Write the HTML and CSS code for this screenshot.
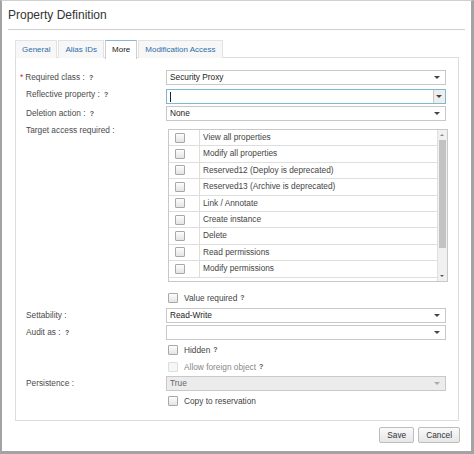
FILE: index.html
```html
<!DOCTYPE html>
<html lang="en">
<head>
    <meta charset="UTF-8">
    <title>Property Definition</title>
    <link rel="stylesheet" href="styles.css">
</head>
<body>
    <div class="window">
        <div class="title">Property Definition</div>

        <div class="tabs">
            <div class="tab">General</div>
            <div class="tab">Alias IDs</div>
            <div class="tab active">More</div>
            <div class="tab">Modification Access</div>
        </div>

        <div class="panel">
            <div class="form">
                <div class="label"><span class="req">*</span>Required class : <span class="help">?</span></div>
                <div class="select"><span>Security Proxy</span><span class="arrow"></span></div>

                <div class="label">Reflective property : <span class="help">?</span></div>
                <div class="select focus"><span class="caret"></span><span class="arrow-btn"><span class="arrow"></span></span></div>

                <div class="label">Deletion action : <span class="help">?</span></div>
                <div class="select"><span>None</span><span class="arrow"></span></div>

                <div class="label">Target access required :</div>
                <div class="listbox">
                    <div class="rows">
                        <div class="row"><span class="cb-cell"><span class="cb"></span></span><span class="txt">View all properties</span></div>
                        <div class="row"><span class="cb-cell"><span class="cb"></span></span><span class="txt">Modify all properties</span></div>
                        <div class="row"><span class="cb-cell"><span class="cb"></span></span><span class="txt">Reserved12 (Deploy is deprecated)</span></div>
                        <div class="row"><span class="cb-cell"><span class="cb"></span></span><span class="txt">Reserved13 (Archive is deprecated)</span></div>
                        <div class="row"><span class="cb-cell"><span class="cb"></span></span><span class="txt">Link / Annotate</span></div>
                        <div class="row"><span class="cb-cell"><span class="cb"></span></span><span class="txt">Create instance</span></div>
                        <div class="row"><span class="cb-cell"><span class="cb"></span></span><span class="txt">Delete</span></div>
                        <div class="row"><span class="cb-cell"><span class="cb"></span></span><span class="txt">Read permissions</span></div>
                        <div class="row"><span class="cb-cell"><span class="cb"></span></span><span class="txt">Modify permissions</span></div>
                    </div>
                    <div class="scrollbar">
                        <span class="sb-up"></span>
                        <span class="sb-track"><span class="sb-thumb"></span></span>
                        <span class="sb-down"></span>
                    </div>
                </div>

                <div class="label"></div>
                <div class="check first"><span class="cb"></span>Value required <span class="help">?</span></div>

                <div class="label">Settability :</div>
                <div class="select"><span>Read-Write</span><span class="arrow"></span></div>

                <div class="label">Audit as : <span class="help">?</span></div>
                <div class="select"><span></span><span class="arrow"></span></div>

                <div class="label"></div>
                <div class="check"><span class="cb"></span>Hidden <span class="help">?</span></div>

                <div class="label"></div>
                <div class="check disabled"><span class="cb"></span>Allow foreign object <span class="help">?</span></div>

                <div class="label">Persistence :</div>
                <div class="select disabled"><span>True</span><span class="arrow"></span></div>

                <div class="label"></div>
                <div class="check"><span class="cb"></span>Copy to reservation</div>
            </div>
        </div>

        <div class="buttons">
            <button class="btn">Save</button>
            <button class="btn">Cancel</button>
        </div>
    </div>
</body>
</html>
```

FILE: styles.css
```css
body {
    margin: 0;
    font-family: "Liberation Sans", Arial, sans-serif;
    color: #333;
}
.window {
    width: 474px;
    height: 454px;
    box-sizing: border-box;
    border-left: 2px solid #a3a3a3;
    border-right: 3px solid #a3a3a3;
    border-bottom: 3px solid #a3a3a3;
    border-top: 1px solid #d0d0d0;
    background: #fff;
}
.title {
    margin: 0 6px;
    padding: 7px 0 0 0;
    height: 21px;
    font-size: 12px;
    color: #333;
    border-bottom: 1px solid #cfcfcf;
}
.tabs {
    display: flex;
    margin: 10px 0 0 13px;
    height: 17px;
}
.tab {
    font-size: 8px;
    color: #2d6ea8;
    padding: 4px 6px 0;
    height: 13px;
    margin-right: 1px;
    background: #f7f7f7;
    border: 1px solid #e2e2e2;
    border-bottom: none;
}
.tab.active {
    color: #222;
    background: #fff;
    border-color: #cfcfcf;
    border-top-color: #8bb6d6;
    height: 14px;
    position: relative;
    z-index: 1;
}
.panel {
    margin-left: 13px;
    width: 444px;
    height: 364px;
    box-sizing: border-box;
    border: 1px solid #dcdcdc;
    padding: 12px 0 0 10px;
}
.form {
    display: grid;
    grid-template-columns: 140px 280px;
    row-gap: 2px;
    font-size: 8.3px;
}
.label {
    color: #4a4a4a;
    line-height: 15px;
    white-space: nowrap;
}
.req {
    color: #d02020;
    margin-left: -6px;
    margin-right: 2px;
}
.help {
    font-weight: bold;
    font-size: 7px;
    color: #555;
    margin-left: 2px;
}
.select {
    position: relative;
    height: 15px;
    box-sizing: border-box;
    border: 1px solid #c8c8c8;
    padding-left: 3px;
    line-height: 13px;
    color: #222;
    background: #fff;
}
.select.focus {
    border-color: #7fb8d2;
    margin-top: 2px;
}
.select.disabled {
    background: #ececec;
    color: #666;
}
.arrow {
    position: absolute;
    right: 5px;
    top: 5px;
    border-left: 3px solid transparent;
    border-right: 3px solid transparent;
    border-top: 3px solid #444;
}
.select.disabled .arrow {
    border-top-color: #aaa;
}
.arrow-btn {
    position: absolute;
    right: 0;
    top: 0;
    width: 11px;
    height: 13px;
    background: #eee;
    border-left: 1px solid #c8c8c8;
}
.arrow-btn .arrow {
    right: 3px;
}
.caret {
    display: inline-block;
    width: 1px;
    height: 10px;
    background: #222;
    vertical-align: middle;
}
.listbox {
    display: flex;
    margin: 6px 0 0 2px;
    width: 280px;
    height: 153px;
    box-sizing: border-box;
    border: 1px solid #c8c8c8;
    overflow: hidden;
}
.rows {
    flex: 1;
}
.row {
    display: flex;
    height: 16.4px;
    box-sizing: border-box;
    border-bottom: 1px solid #dedede;
    line-height: 15px;
}
.cb-cell {
    width: 31px;
    box-sizing: border-box;
    padding-left: 6px;
    border-right: 1px solid #dedede;
    display: flex;
    align-items: center;
}
.txt {
    padding-left: 3px;
    color: #444;
}
.cb {
    display: inline-block;
    width: 8px;
    height: 8px;
    border: 1px solid #a8a8a8;
    border-radius: 1px;
    background: linear-gradient(#fdfdfd, #e4e4e4);
}
.scrollbar {
    width: 9px;
    display: flex;
    flex-direction: column;
    background: #f0f0f0;
    border-left: 1px solid #e0e0e0;
}
.sb-up, .sb-down {
    height: 10px;
    position: relative;
}
.sb-up::after, .sb-down::after {
    content: "";
    position: absolute;
    left: 2px;
    top: 4px;
    border-left: 2px solid transparent;
    border-right: 2px solid transparent;
}
.sb-up::after {
    border-bottom: 2px solid #888;
}
.sb-down::after {
    border-top: 2px solid #555;
}
.sb-track {
    flex: 1;
}
.sb-thumb {
    display: block;
    margin: 0 1px;
    height: 108px;
    background: #c3c3c3;
}
.check {
    display: flex;
    align-items: center;
    height: 15px;
    margin-left: 2px;
    color: #444;
}
.check.first {
    margin: 6px 0 1px 2px;
}
.check .cb {
    margin-right: 6px;
}
.check .help {
    margin-left: 3px;
}
.check.disabled {
    color: #888;
}
.check.disabled .cb {
    border-color: #ddd;
    background: #f6f6f6;
}
.buttons {
    display: flex;
    justify-content: flex-end;
    gap: 4px;
    margin: 6px 11px 0 0;
}
.btn {
    height: 16px;
    padding: 0 7px;
    font-family: "Liberation Sans", Arial, sans-serif;
    font-size: 8.3px;
    color: #333;
    background: linear-gradient(#fafafa, #e6e6e6);
    border: 1px solid #bdbdbd;
    border-radius: 2px;
}
```
